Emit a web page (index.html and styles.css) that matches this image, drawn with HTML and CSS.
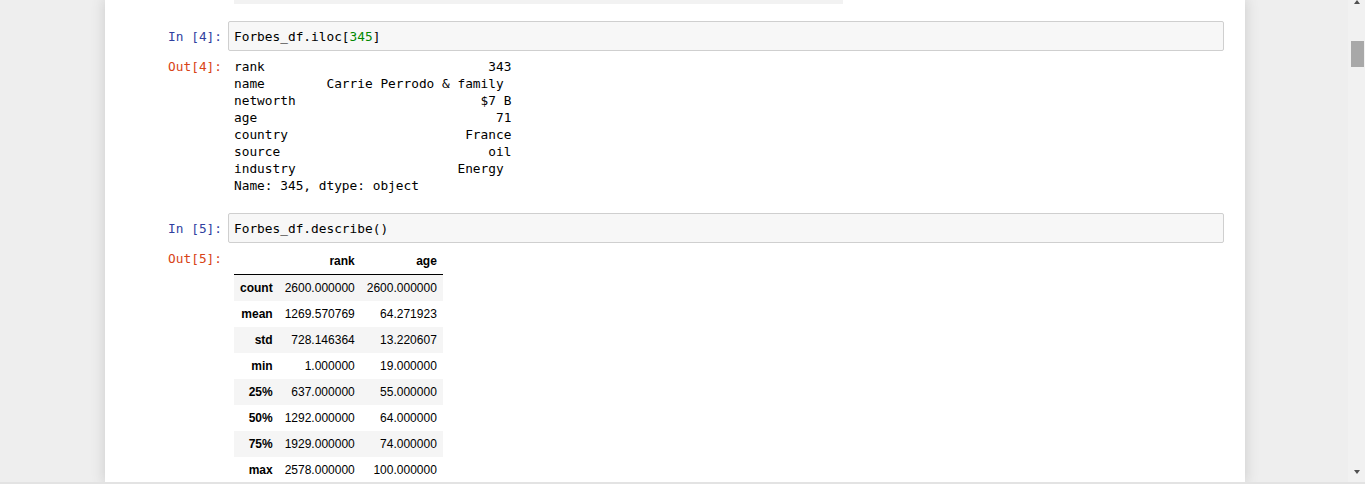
FILE: index.html
```html
<!DOCTYPE html>
<html>
<head>
<meta charset="utf-8">
<link rel="stylesheet" href="styles.css">
</head>
<body>
<div class="window">
  <div class="page">
    <div class="notebook">
      <div class="prev-output"></div>

      <div class="cell">
        <div class="row">
          <div class="prompt in">In [4]:</div>
          <div class="input-area"><span class="code">Forbes_df.iloc[<span class="num">345</span>]</span></div>
        </div>
        <div class="row">
          <div class="prompt out out-text">Out[4]:</div>
          <div class="output-sub out-text"><pre class="out-pre">rank                             343
name        Carrie Perrodo &amp; family 
networth                        $7 B
age                               71
country                       France
source                           oil
industry                     Energy 
Name: 345, dtype: object</pre></div>
        </div>
      </div>

      <div class="cell">
        <div class="row">
          <div class="prompt in">In [5]:</div>
          <div class="input-area"><span class="code">Forbes_df.describe()</span></div>
        </div>
        <div class="row">
          <div class="prompt out out-table">Out[5]:</div>
          <div class="output-sub out-table-wrap">
            <table class="df">
              <thead>
                <tr><th></th><th>rank</th><th>age</th></tr>
              </thead>
              <tbody>
                <tr><th>count</th><td>2600.000000</td><td>2600.000000</td></tr>
                <tr><th>mean</th><td>1269.570769</td><td>64.271923</td></tr>
                <tr><th>std</th><td>728.146364</td><td>13.220607</td></tr>
                <tr><th>min</th><td>1.000000</td><td>19.000000</td></tr>
                <tr><th>25%</th><td>637.000000</td><td>55.000000</td></tr>
                <tr><th>50%</th><td>1292.000000</td><td>64.000000</td></tr>
                <tr><th>75%</th><td>1929.000000</td><td>74.000000</td></tr>
                <tr><th>max</th><td>2578.000000</td><td>100.000000</td></tr>
              </tbody>
            </table>
          </div>
        </div>
      </div>
    </div>
  </div>
  <div class="scrollbar">
    <div class="arrow-up"></div>
    <div class="thumb"></div>
    <div class="arrow-down"></div>
  </div>
</div>
<div class="bottom-line"></div>
</body>
</html>
```

FILE: styles.css
```css
html, body {
  margin: 0;
  padding: 0;
  height: 484px;
  overflow: hidden;
  background: #eeeeee;
}

.window {
  display: flex;
  height: 482px;
  overflow: hidden;
}

.page {
  flex: 1;
  overflow: hidden;
}

.notebook {
  width: 1140px;
  margin-left: 105px;
  height: 100%;
  background: #ffffff;
  box-shadow: 0 0 12px 1px rgba(87, 87, 87, 0.2);
  box-sizing: border-box;
}

.prev-output {
  margin-left: 129px;
  width: 609px;
  height: 4px;
  background: #f2f2f2;
  margin-bottom: 12px;
}

.cell {
  padding: 5px 21px 5px 20px;
}

.row {
  display: flex;
  align-items: flex-start;
}

.prompt {
  width: 103px;
  flex: none;
  box-sizing: border-box;
  padding-right: 6px;
  text-align: right;
  font-family: "DejaVu Sans Mono", "Liberation Mono", monospace;
  font-size: 12.8px;
  line-height: 17px;
}

.prompt.in {
  color: #303f9f;
  padding-top: 6.5px;
}

.prompt.out {
  color: #d84315;
  padding-top: 7px;
}

.input-area {
  flex: 1;
  border: 1px solid #cfcfcf;
  border-radius: 2px;
  background: #f7f7f7;
  padding: 5.5px 5px;
  font-family: "DejaVu Sans Mono", "Liberation Mono", monospace;
  font-size: 12.8px;
  line-height: 17px;
  color: #000;
}

.num {
  color: #008800;
}

.output-sub {
  flex: 1;
  padding-left: 6px;
}

.output-sub.out-text {
  padding-top: 7px;
  padding-bottom: 9px;
}

.out-pre {
  margin: 0;
  font-family: "DejaVu Sans Mono", "Liberation Mono", monospace;
  font-size: 12.8px;
  line-height: 17px;
  color: #000;
}

.out-table-wrap {
  padding-top: 5px;
}

.df {
  border-collapse: collapse;
  border-spacing: 0;
  font-family: "Liberation Sans", Arial, sans-serif;
  font-size: 12px;
  color: #000;
}

.df th,
.df td {
  padding: 6px 6px;
  line-height: 14px;
  text-align: right;
  vertical-align: middle;
  white-space: nowrap;
}

.df th {
  font-weight: bold;
}

.df td {
  font-weight: normal;
}

.df thead th {
  border-bottom: 1px solid #000;
}

.df tbody tr:nth-child(odd) {
  background: #f5f5f5;
}

.scrollbar {
  width: 17px;
  flex: none;
  background: #f1f1f1;
  display: flex;
  flex-direction: column;
  align-items: flex-start;
}

.arrow-up {
  width: 0;
  height: 0;
  margin-left: 6px;
  border-left: 3.5px solid transparent;
  border-right: 3.5px solid transparent;
  border-bottom: 4px solid #505050;
}

.thumb {
  margin-top: 37px;
  margin-left: 3px;
  width: 13px;
  height: 26px;
  background: #a8a8a8;
}

.arrow-down {
  margin-top: auto;
  margin-bottom: 8px;
  margin-left: 6px;
  width: 0;
  height: 0;
  border-left: 3.5px solid transparent;
  border-right: 3.5px solid transparent;
  border-top: 4px solid #505050;
}

.bottom-line {
  height: 2px;
  background: #e3e3e3;
}
```
